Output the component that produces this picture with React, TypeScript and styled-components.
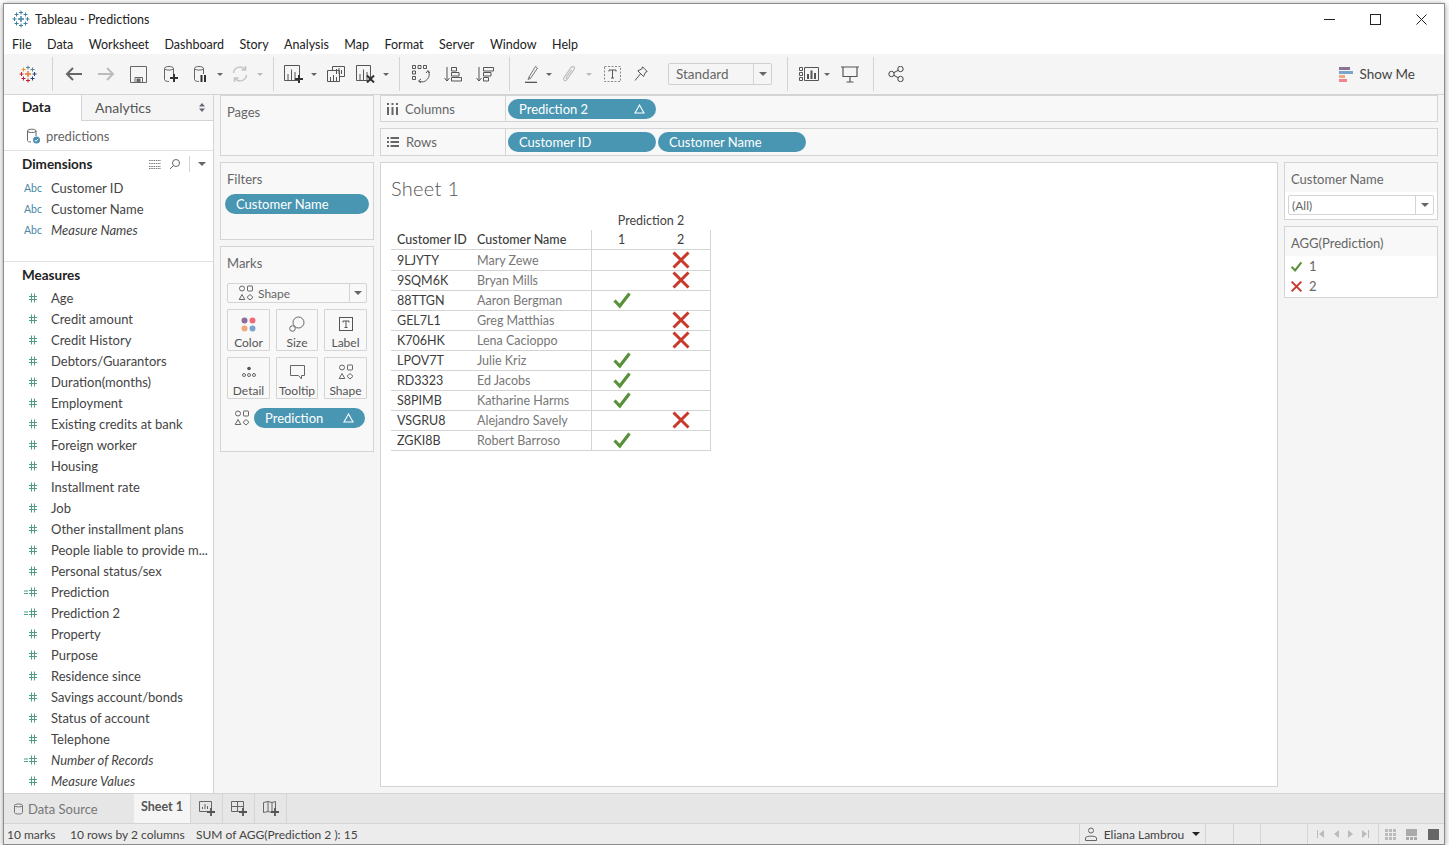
import React, { FC, ReactNode } from 'react';
import styled, { createGlobalStyle } from 'styled-components';

const Global = createGlobalStyle`
    html, body {
        margin: 0;
        padding: 0;
        background: #fff;
        overflow: hidden;
        font-family: "Lato", "Noto Sans", sans-serif;
        font-size: 13px;
        color: #333;
    }
    * { box-sizing: border-box; }
    svg { display: block; }
`;

const Window = styled.div`
    margin: 3px 0 0 3px;
    width: 1442px;
    height: 842px;
    border: 1px solid #8c8c8c;
    box-shadow: 0 1px 6px rgba(0, 0, 0, 0.4);
    background: #f5f5f5;
    display: flex;
    flex-direction: column;
`;

const TitleBar = styled.div`
    height: 30px;
    background: #fff;
    display: flex;
    align-items: center;
    padding-left: 8px;
    color: #222;
    font-size: 12.5px;
    flex: none;
`;

const TitleText = styled.span`
    margin-left: 5px;
    flex: 1;
`;

const WinBtn = styled.div`
    width: 46px;
    height: 30px;
    display: flex;
    align-items: center;
    justify-content: center;
`;

const MenuBar = styled.div`
    height: 20px;
    background: #fff;
    display: flex;
    align-items: center;
    padding-left: 8px;
    gap: 15.5px;
    color: #222;
    font-size: 12.5px;
    flex: none;
`;

const Toolbar = styled.div`
    height: 41px;
    display: flex;
    align-items: center;
    background: #f5f5f5;
    border-bottom: 1px solid #d4d4d4;
    flex: none;
`;

const ToolBtn = styled.div<{ $w: number; $ml?: number }>`
    width: ${p => p.$w}px;
    margin-left: ${p => p.$ml || 0}px;
    height: 32px;
    display: flex;
    align-items: center;
    justify-content: center;
    flex: none;
`;

const ToolSep = styled.div<{ $ml?: number }>`
    width: 1px;
    height: 34px;
    background: #d4d4d4;
    margin-left: ${p => p.$ml || 0}px;
    flex: none;
`;

const Caret = styled.div<{ $light?: boolean; $size?: number }>`
    width: 0;
    height: 0;
    border-left: ${p => p.$size || 3}px solid transparent;
    border-right: ${p => p.$size || 3}px solid transparent;
    border-top: ${p => p.$size || 3}px solid ${p => (p.$light ? '#bbb' : '#666')};
`;

const ToolSelect = styled.div`
    margin-left: 14px;
    width: 104px;
    height: 22px;
    border: 1px solid #cfcfcf;
    border-radius: 2px;
    display: flex;
    align-items: center;
    color: #666;
    font-size: 13.5px;
    flex: none;
`;

const SelectText = styled.div`
    flex: 1;
    padding-left: 7px;
`;

const SelectArrow = styled.div<{ $w?: number }>`
    width: ${p => p.$w || 18}px;
    align-self: stretch;
    border-left: 1px solid #d4d4d4;
    display: flex;
    align-items: center;
    justify-content: center;
`;

const ShowMe = styled.div`
    margin-left: auto;
    padding-right: 29px;
    display: flex;
    align-items: center;
    gap: 6px;
    font-size: 13.5px;
    color: #444;
`;

const Main = styled.div`
    flex: 1;
    display: flex;
    min-height: 0;
`;

const Sidebar = styled.div`
    width: 210px;
    background: #fff;
    border-right: 1px solid #d4d4d4;
    overflow: hidden;
    flex: none;
`;

const SideTabs = styled.div`
    height: 26px;
    display: flex;
    background: #f5f5f5;
`;

const DataTab = styled.div`
    width: 78px;
    background: #fff;
    border-right: 1px solid #d4d4d4;
    padding-left: 18px;
    line-height: 25px;
    font-weight: 700;
    font-size: 13.5px;
    color: #222;
`;

const AnalyticsTab = styled.div`
    flex: 1;
    border-bottom: 1px solid #d4d4d4;
    padding: 0 8px 0 13px;
    display: flex;
    align-items: center;
    justify-content: space-between;
    font-size: 14px;
    color: #555;
`;

const SourceRow = styled.div`
    height: 30px;
    display: flex;
    align-items: center;
    padding-left: 22px;
    gap: 6px;
    color: #666;
    border-bottom: 1px solid #e2e2e2;
`;

const SectionHead = styled.div<{ $h: number }>`
    height: ${p => p.$h}px;
    display: flex;
    align-items: center;
    padding-left: 18px;
    font-weight: 700;
    font-size: 13.5px;
    color: #222;
`;

const HeadTools = styled.div`
    margin-left: auto;
    display: flex;
    align-items: center;
    padding-right: 7px;
`;

const HeadSep = styled.div`
    width: 1px;
    height: 16px;
    background: #d4d4d4;
    margin: 0 8px 0 8px;
`;

const FieldList = styled.div<{ $divider?: boolean }>`
    padding-bottom: ${p => (p.$divider ? 21 : 0)}px;
    border-bottom: ${p => (p.$divider ? '1px solid #e2e2e2' : 'none')};
`;

const FieldRow = styled.div<{ $italic?: boolean }>`
    height: 21px;
    display: flex;
    align-items: center;
    color: #444;
    font-style: ${p => (p.$italic ? 'italic' : 'normal')};
    white-space: nowrap;
`;

const FieldIcon = styled.div`
    margin-left: 19px;
    margin-right: 8px;
    width: 20px;
    display: flex;
    justify-content: center;
    align-items: center;
    flex: none;
`;

const AbcMark = styled.span`
    font-size: 10.5px;
    font-style: normal;
    color: #4a86a6;
`;

const CardColumn = styled.div`
    width: 154px;
    margin-left: 6px;
    padding-top: 0;
    display: flex;
    flex-direction: column;
    gap: 6px;
    flex: none;
`;

const Card = styled.div<{ $h: number }>`
    height: ${p => p.$h}px;
    background: #f8f8f8;
    border: 1px solid #d4d4d4;
    flex: none;
`;

const CardTitle = styled.div`
    padding: 8px 6px 0;
    height: 31px;
    color: #666;
`;

const Pill = styled.div<{ $w: number }>`
    width: ${p => p.$w}px;
    height: 20px;
    border-radius: 10px;
    background: #4996b2;
    color: #fff;
    display: flex;
    align-items: center;
    justify-content: space-between;
    padding: 0 11px;
    flex: none;
    white-space: nowrap;
`;

const PillSlot = styled.div`
    padding-left: 4px;
`;

const MarkSelect = styled.div`
    margin: 5px 6px 6px;
    height: 20px;
    border: 1px solid #d4d4d4;
    border-radius: 2px;
    display: flex;
    align-items: center;
    font-size: 12px;
    color: #666;
`;

const MarkSelectLabel = styled.div`
    flex: 1;
    display: flex;
    align-items: center;
    gap: 4px;
    padding-left: 10px;
`;

const MarkGrid = styled.div`
    margin: 0 6px;
    display: grid;
    grid-template-columns: 43px 42px 43px;
    grid-auto-rows: 42px;
    column-gap: 6px;
    row-gap: 6px;
`;

const MarkBtn = styled.div`
    border: 1px solid #d4d4d4;
    border-radius: 1px;
    display: flex;
    flex-direction: column;
    align-items: center;
    font-size: 12px;
    color: #555;
    padding-top: 5px;
    white-space: nowrap;
`;

const MarkIcon = styled.div`
    height: 20px;
    display: flex;
    align-items: center;
    justify-content: center;
    margin-bottom: 2px;
`;

const MarkPillRow = styled.div`
    margin-top: 9px;
    padding-left: 13px;
    display: flex;
    align-items: center;
    gap: 4px;
`;

const WorkArea = styled.div`
    flex: 1;
    margin: 0 6px 6px 6px;
    display: flex;
    flex-direction: column;
    min-width: 0;
`;

const Shelf = styled.div<{ $h: number; $mb: number }>`
    height: ${p => p.$h}px;
    margin-bottom: ${p => p.$mb}px;
    border: 1px solid #d4d4d4;
    background: #f8f8f8;
    display: flex;
    align-items: center;
    flex: none;
`;

const ShelfLabel = styled.div`
    width: 125px;
    align-self: stretch;
    border-right: 1px solid #d4d4d4;
    display: flex;
    align-items: center;
    gap: 7px;
    padding-left: 6px;
    color: #666;
`;

const ShelfPills = styled.div`
    display: flex;
    gap: 2px;
    padding-left: 2px;
`;

const ViewRow = styled.div`
    flex: 1;
    display: flex;
    gap: 6px;
    min-height: 0;
`;

const Sheet = styled.div`
    flex: 1;
    background: #fff;
    border: 1px solid #d4d4d4;
    padding: 0 10px;
`;

const SheetTitle = styled.div`
    height: 48px;
    padding-top: 12px;
    font-size: 20px;
    font-weight: 300;
    color: #555;
    line-height: 27px;
    letter-spacing: 0.3px;
`;

const TableRow = styled.div`
    display: grid;
    grid-template-columns: 80px 120px 60px 60px;
    width: 321px;
    height: 20px;
`;

const HeadRowTop = styled.div`
    width: 320px;
    height: 19px;
    padding-left: 200px;
    text-align: center;
    line-height: 19px;
    color: #444;
    font-size: 12.5px;
`;

const Cell = styled.div<{ $muted?: boolean; $head?: boolean; $first?: boolean; $last?: boolean }>`
    display: flex;
    align-items: center;
    justify-content: ${p => (p.$first || p.$last ? 'center' : 'flex-start')};
    padding-left: ${p => (p.$first || p.$last ? 0 : 6)}px;
    border-bottom: 1px solid #d4d4d4;
    border-left: ${p => (p.$first ? '1px solid #d4d4d4' : 'none')};
    border-right: ${p => (p.$last ? '1px solid #d4d4d4' : 'none')};
    color: ${p => (p.$muted ? '#777' : '#3c3c3c')};
    font-size: 12.5px;
    white-space: nowrap;
    font-weight: ${p => (p.$head ? 500 : 400)};
`;

const RightColumn = styled.div`
    width: 154px;
    display: flex;
    flex-direction: column;
    gap: 6px;
    flex: none;
`;

const LegendCard = styled.div<{ $h: number }>`
    height: ${p => p.$h}px;
    border: 1px solid #d4d4d4;
    background: #fff;
    flex: none;
`;

const LegendTitle = styled.div`
    height: 29px;
    background: #f8f8f8;
    padding: 8px 6px 0;
    color: #666;
`;

const FilterSelect = styled.div`
    margin: 3px 3px 0;
    height: 20px;
    border: 1px solid #d4d4d4;
    border-radius: 2px;
    display: flex;
    align-items: center;
    padding-left: 3px;
    color: #666;
    font-size: 12px;
`;

const FilterValue = styled.div`
    flex: 1;
`;

const LegendRow = styled.div`
    height: 20px;
    display: flex;
    align-items: center;
    gap: 6px;
    padding-left: 5px;
    color: #666;
`;

const SheetTabs = styled.div`
    height: 30px;
    display: flex;
    background: #e6e6e6;
    border-top: 1px solid #d4d4d4;
    flex: none;
`;

const SourceTab = styled.div`
    width: 130px;
    display: flex;
    align-items: center;
    gap: 5px;
    padding-left: 10px;
    color: #777;
`;

const ActiveTab = styled.div`
    width: 57px;
    background: #f5f5f5;
    border-right: 1px solid #d4d4d4;
    text-align: center;
    line-height: 26px;
    font-weight: 700;
    font-size: 12.5px;
    color: #555;
`;

const AddTab = styled.div`
    width: 32px;
    border-right: 1px solid #d4d4d4;
    display: flex;
    align-items: center;
    justify-content: center;
`;

const StatusBar = styled.div`
    height: 21px;
    display: flex;
    align-items: center;
    background: #ececec;
    border-top: 1px solid #d4d4d4;
    font-size: 12px;
    color: #444;
    flex: none;
`;

const StatusText = styled.div<{ $w: number; $ml?: number }>`
    width: ${p => p.$w}px;
    margin-left: ${p => p.$ml || 0}px;
    white-space: nowrap;
`;

const StatusCell = styled.div<{ $w: number }>`
    width: ${p => p.$w}px;
    align-self: stretch;
    border-left: 1px solid #d4d4d4;
    display: flex;
    align-items: center;
    justify-content: center;
    gap: 7px;
    flex: none;
`;

const Spacer = styled.div`
    flex: 1;
`;

const BlackCaret = styled.div`
    width: 0;
    height: 0;
    border-left: 4px solid transparent;
    border-right: 4px solid transparent;
    border-top: 4px solid #222;
    margin-left: 1px;
`;

const Line: FC<{ w: number; h: number; c?: string; sw?: number; children: ReactNode }> = ({ w, h, c = '#555', sw = 1, children }) => (
    <svg width={w} height={h} viewBox={`0 0 ${w} ${h}`} fill="none" stroke={c} strokeWidth={sw}>{children}</svg>
);

const Plus: FC<{ x: number; y: number; r: number; c: string; sw?: number }> = ({ x, y, r, c, sw = 1 }) => (
    <path d={`M${x - r} ${y}H${x + r}M${x} ${y - r}V${y + r}`} stroke={c} strokeWidth={sw} fill="none" />
);

const TableauLogo: FC<{ mono?: boolean }> = ({ mono }) => {
    const c = (v: string) => (mono ? '#3f7fa6' : v);
    return (
        <svg width="18" height="18" viewBox="0 0 18 18">
            <Plus x={9} y={9} r={3} c={c('#e8762d')} sw={1.4} />
            <Plus x={9} y={2.5} r={2} c={c('#5b879b')} />
            <Plus x={9} y={15.5} r={2} c={c('#c72037')} />
            <Plus x={2.5} y={9} r={2} c={c('#c72037')} />
            <Plus x={15.5} y={9} r={2} c={c('#1f447e')} />
            <Plus x={4.5} y={4.5} r={2} c={c('#e8962d')} />
            <Plus x={13.5} y={4.5} r={2} c={c('#5b879b')} />
            <Plus x={4.5} y={13.5} r={2} c={c('#c72037')} />
            <Plus x={13.5} y={13.5} r={2} c={c('#1f447e')} />
        </svg>
    );
};

const Cylinder: FC<{ children?: ReactNode }> = ({ children }) => (
    <Line w={18} h={18} c="#666">
        <path d="M3.5 3.5C3.5 .8 12.5 .8 12.5 3.5V9M3.5 3.5C3.5 5.6 12.5 5.6 12.5 3.5M3.5 3.5V14.5C3.5 15.8 5.5 16.5 8 16.5" />
        {children}
    </Line>
);

const Check: FC<{ size?: number }> = ({ size = 20 }) => (
    <svg width={size} height={size} viewBox="0 0 20 20" fill="none" stroke="#59903a" strokeWidth="3.2">
        <path d="M2.5 10.5L7.8 16L17.5 3.5" />
    </svg>
);

const Cross: FC<{ size?: number }> = ({ size = 20 }) => (
    <svg width={size} height={size} viewBox="0 0 20 20" fill="none" stroke="#c8392b" strokeWidth="3">
        <path d="M2.5 2.5L17.5 17.5M17.5 2.5L2.5 17.5" />
    </svg>
);

const Delta = () => (
    <svg width="11" height="10" viewBox="0 0 11 10" fill="none" stroke="#fff" strokeWidth="1.1">
        <path d="M5.5 1L1 9H10Z" />
    </svg>
);

const ShapeIcon = () => (
    <Line w={16} h={16} c="#666">
        <circle cx="4" cy="3.5" r="2.5" />
        <rect x="9.5" y="1" width="5" height="5" rx="0.5" />
        <path d="M4 9.5L1.2 14.5H6.8Z" />
        <path d="M12 9.5L15 12.3L12 15L9 12.3Z" />
    </Line>
);

const Hash: FC<{ eq?: boolean }> = ({ eq }) => (
    <svg width="20" height="12" viewBox="0 0 20 12" fill="none" stroke="#4f9f7e" strokeWidth="1">
        {eq && <path d="M1 5H5M1 7.5H5" />}
        <path d="M8.5 1.5V10.5M11.5 1.5V10.5M6 4.5H14M6 7.5H14" />
    </svg>
);

const dimensions = ['Customer ID', 'Customer Name', 'Measure Names'];

const measures: { name: string; eq?: boolean; italic?: boolean }[] = [
    { name: 'Age' },
    { name: 'Credit amount' },
    { name: 'Credit History' },
    { name: 'Debtors/Guarantors' },
    { name: 'Duration(months)' },
    { name: 'Employment' },
    { name: 'Existing credits at bank' },
    { name: 'Foreign worker' },
    { name: 'Housing' },
    { name: 'Installment rate' },
    { name: 'Job' },
    { name: 'Other installment plans' },
    { name: 'People liable to provide m...' },
    { name: 'Personal status/sex' },
    { name: 'Prediction', eq: true },
    { name: 'Prediction 2', eq: true },
    { name: 'Property' },
    { name: 'Purpose' },
    { name: 'Residence since' },
    { name: 'Savings account/bonds' },
    { name: 'Status of account' },
    { name: 'Telephone' },
    { name: 'Number of Records', eq: true, italic: true },
    { name: 'Measure Values', italic: true },
];

const rows: [string, string, 1 | 2][] = [
    ['9LJYTY', 'Mary Zewe', 2],
    ['9SQM6K', 'Bryan Mills', 2],
    ['88TTGN', 'Aaron Bergman', 1],
    ['GEL7L1', 'Greg Matthias', 2],
    ['K706HK', 'Lena Cacioppo', 2],
    ['LPOV7T', 'Julie Kriz', 1],
    ['RD3323', 'Ed Jacobs', 1],
    ['S8PIMB', 'Katharine Harms', 1],
    ['VSGRU8', 'Alejandro Savely', 2],
    ['ZGKI8B', 'Robert Barroso', 1],
];

const menus = ['File', 'Data', 'Worksheet', 'Dashboard', 'Story', 'Analysis', 'Map', 'Format', 'Server', 'Window', 'Help'];

const App: FC = () => (
    <Window>
        <Global />
        <TitleBar>
            <TableauLogo mono />
            <TitleText>Tableau - Predictions</TitleText>
            <WinBtn><Line w={11} h={11} c="#222"><path d="M0 5.5H11" /></Line></WinBtn>
            <WinBtn><Line w={11} h={11} c="#222"><rect x=".5" y=".5" width="10" height="10" /></Line></WinBtn>
            <WinBtn><Line w={11} h={11} c="#222"><path d="M.5 .5L10.5 10.5M10.5 .5L.5 10.5" /></Line></WinBtn>
        </TitleBar>
        <MenuBar>
            {menus.map(m => <span key={m}>{m}</span>)}
        </MenuBar>
        <Toolbar>
            <ToolBtn $w={48}><TableauLogo /></ToolBtn>
            <ToolSep />
            <ToolBtn $w={32} $ml={5}>
                <Line w={18} h={14} c="#666" sw={2}><path d="M17 7H2M8 1L2 7L8 13" /></Line>
            </ToolBtn>
            <ToolBtn $w={32}>
                <Line w={18} h={14} c="#bbb" sw={2}><path d="M1 7H16M10 1L16 7L10 13" /></Line>
            </ToolBtn>
            <ToolBtn $w={32}>
                <Line w={17} h={17} c="#666"><path d="M.5 .5H16.5V16.5H.5ZM5 16.5V11.5H12.5V16.5" /><rect x="7" y="13" width="3" height="3" fill="#666" /></Line>
            </ToolBtn>
            <ToolBtn $w={31}>
                <Cylinder><Plus x={13} y={13} r={4} c="#333" sw={2} /></Cylinder>
            </ToolBtn>
            <ToolBtn $w={30}>
                <Cylinder><path d="M10.5 10V17M14 10V17" stroke="#333" strokeWidth="2" /></Cylinder>
            </ToolBtn>
            <ToolBtn $w={10}><Caret /></ToolBtn>
            <ToolBtn $w={30}>
                <Line w={18} h={18} c="#c4c4c4" sw={1.5}><path d="M2.5 8A6.5 6.5 0 0 1 14 4.5M15.5 10A6.5 6.5 0 0 1 4 13.5M14.5 1V5H10.5M3.5 17V13H7.5" /></Line>
            </ToolBtn>
            <ToolBtn $w={10}><Caret $light /></ToolBtn>
            <ToolSep $ml={8} />
            <ToolBtn $w={32} $ml={4}>
                <Line w={20} h={18} c="#555">
                    <path d="M.5 .5H15.5V15.5H.5ZM4 15.5V9M7.5 15.5V4.5M11 15.5V7" />
                    <Plus x={15} y={14} r={4} c="#333" sw={2} />
                </Line>
            </ToolBtn>
            <ToolBtn $w={8}><Caret /></ToolBtn>
            <ToolBtn $w={36}>
                <Line w={18} h={16} c="#555">
                    <path d="M5.5 4V.5H17.5V10.5H13M9.5 8V3M12 8V2M14.5 8V4" />
                    <path d="M.5 4.5H12.5V15.5H.5ZM3.5 15.5V11M6.5 15.5V9M9.5 15.5V11" />
                </Line>
            </ToolBtn>
            <ToolBtn $w={24}>
                <Line w={20} h={18} c="#555">
                    <path d="M.5 .5H14.5V15.5H.5ZM4 15.5V9M7.5 15.5V4.5M11 15.5V7" />
                    <path d="M11 10.5L18 17.5M18 10.5L11 17.5" stroke="#333" strokeWidth="2" />
                </Line>
            </ToolBtn>
            <ToolBtn $w={16}><Caret /></ToolBtn>
            <ToolSep $ml={5} />
            <ToolBtn $w={42}>
                <Line w={18} h={18} c="#555">
                    <path d="M.5 .5H3.5V3.5H.5ZM6 .5H9V3.5H6ZM11.5 .5H14.5V3.5H11.5ZM.5 6H3.5V9H.5ZM.5 11.5H3.5V14.5H.5Z" />
                    <path d="M16 6A7 7 0 0 1 7 16M14 8L16 5.5L18 8M9 14L6.5 16L9 18" />
                </Line>
            </ToolBtn>
            <ToolBtn $w={22}>
                <Line w={18} h={16} c="#555">
                    <path d="M3 1V15M.5 12L3 15L5.5 12M7.5 1.500H12.5V5H7.500ZM7.500 6.500H15V10H7.500ZM7.500 11.500H17.500V15H7.500Z" />
                </Line>
            </ToolBtn>
            <ToolBtn $w={42}>
                <Line w={18} h={16} c="#555">
                    <path d="M3 1V15M.5 12L3 15L5.500 12M7.500 1.500H17.500V5H7.500ZM7.500 6.500H15V10H7.500ZM7.500 11.500H12.500V15H7.500Z" />
                </Line>
            </ToolBtn>
            <ToolSep $ml={3} />
            <ToolBtn $w={20} $ml={12}>
                <Line w={14} h={18} c="#777">
                    <path d="M4 12L3 14.500L5.500 13.500L12.500 3L10.500 1.500ZM4 12L5.500 13.500" />
                    <path d="M0 17.500H12" stroke="#555" strokeWidth="1.6" />
                </Line>
            </ToolBtn>
            <ToolBtn $w={14}><Caret /></ToolBtn>
            <ToolBtn $w={26}>
                <Line w={14} h={18} c="#bbb" sw={1.2}>
                    <path d="M11 6L5 14.500C3 17 .5 15 2 12.500L9 2.500C10.500 .5 13.500 2 12 4.500L6 13C5 14.300 3.800 13.500 4.500 12L9.500 5" />
                </Line>
            </ToolBtn>
            <ToolBtn $w={14}><Caret $light /></ToolBtn>
            <ToolBtn $w={32}>
                <svg width="17" height="16" viewBox="0 0 17 16" fill="none" stroke="#888">
                    <rect x=".5" y=".5" width="16" height="15" strokeDasharray="2 1.500" />
                    <path d="M5 5.500V4H12V5.500M8.500 4V12M7 12H10" stroke="#555" />
                </svg>
            </ToolBtn>
            <ToolBtn $w={26}>
                <Line w={14} h={16} c="#555">
                    <path d="M8.500 .8L13.200 5.500L11.500 6.200L9.500 10.500L3.800 4.800L8 2.800ZM6.500 7.800L1 14.500" />
                </Line>
            </ToolBtn>
            <ToolSelect>
                <SelectText>Standard</SelectText>
                <SelectArrow $w={18}><Caret $size={4} /></SelectArrow>
            </ToolSelect>
            <ToolSep $ml={15} />
            <ToolBtn $w={24} $ml={9}>
                <Line w={20} h={14} c="#555">
                    <path d="M.5 .5H3.500V3.500H.5ZM.5 5.500H3.500V8.500H.5ZM.5 10.500H3.500V13.500H.5ZM5.500 .5H19.500V13.500H5.500Z" />
                    <path d="M9 12V7M12.500 12V3.500M16 12V6" strokeWidth="2" />
                </Line>
            </ToolBtn>
            <ToolBtn $w={12}><Caret /></ToolBtn>
            <ToolBtn $w={34}>
                <Line w={18} h={17} c="#555">
                    <path d="M0 1H18M2 1V10.500H16V1M9 10.500V15.500M5.500 16H12.500" strokeWidth="1.200" />
                </Line>
            </ToolBtn>
            <ToolSep $ml={6} />
            <ToolBtn $w={44}>
                <Line w={16} h={16} c="#444">
                    <circle cx="3.500" cy="8" r="2.700" /><circle cx="12.500" cy="3" r="2.700" /><circle cx="12.500" cy="13" r="2.700" />
                    <path d="M5.800 6.700L10.200 4.300M5.800 9.300L10.200 11.700" />
                </Line>
            </ToolBtn>
            <ShowMe>
                <svg width="14" height="15" viewBox="0 0 14 15">
                    <rect x="0" y="0" width="11" height="3" fill="#8a7398" />
                    <rect x="0" y="4" width="14" height="3" fill="#7ba3cc" />
                    <rect x="0" y="8" width="6" height="3" fill="#f0a77e" />
                    <rect x="0" y="12" width="8" height="3" fill="#f4828c" />
                </svg>
                Show Me
            </ShowMe>
        </Toolbar>
        <Main>
            <Sidebar>
                <SideTabs>
                    <DataTab>Data</DataTab>
                    <AnalyticsTab>
                        Analytics
                        <svg width="6" height="9" viewBox="0 0 6 9" fill="#667"><path d="M3 0L6 3.500H0ZM3 9L0 5.500H6Z" /></svg>
                    </AnalyticsTab>
                </SideTabs>
                <SourceRow>
                    <svg width="14" height="16" viewBox="0 0 14 16" fill="none" stroke="#666">
                        <path d="M1.500 3C1.500 .6 10 .6 10 3V8M1.500 3C1.500 5 10 5 10 3M1.500 3V12.500C1.500 13.500 3 14 5 14" />
                        <circle cx="10.500" cy="12" r="3.500" fill="#4a8fb0" stroke="none" />
                        <path d="M8.800 12L10 13.300L12.200 10.800" stroke="#fff" />
                    </svg>
                    predictions
                </SourceRow>
                <SectionHead $h={26}>
                    Dimensions
                    <HeadTools>
                        <svg width="12" height="9" viewBox="0 0 12 9" stroke="#777" strokeDasharray="1.500 .8"><path d="M0 .5H12M0 3.500H12M0 6.500H12M0 8.500H12" /></svg>
                        <svg width="12" height="12" viewBox="0 0 12 12" fill="none" stroke="#666" style={{ marginLeft: 8 }}><circle cx="7" cy="5" r="3.500" /><path d="M4.500 7.500L1 11" /></svg>
                        <HeadSep />
                        <Caret $size={4} />
                    </HeadTools>
                </SectionHead>
                <FieldList $divider>
                    {dimensions.map((d, i) => (
                        <FieldRow key={d} $italic={i === 2}>
                            <FieldIcon><AbcMark>Abc</AbcMark></FieldIcon>
                            {d}
                        </FieldRow>
                    ))}
                </FieldList>
                <SectionHead $h={25}>Measures</SectionHead>
                <FieldList>
                    {measures.map(m => (
                        <FieldRow key={m.name} $italic={m.italic}>
                            <FieldIcon><Hash eq={m.eq} /></FieldIcon>
                            {m.name}
                        </FieldRow>
                    ))}
                </FieldList>
            </Sidebar>
            <CardColumn>
                <Card $h={61}><CardTitle>Pages</CardTitle></Card>
                <Card $h={78}>
                    <CardTitle>Filters</CardTitle>
                    <PillSlot><Pill $w={144}>Customer Name</Pill></PillSlot>
                </Card>
                <Card $h={206}>
                    <CardTitle>Marks</CardTitle>
                    <MarkSelect>
                        <MarkSelectLabel><ShapeIcon />Shape</MarkSelectLabel>
                        <SelectArrow $w={17}><Caret $size={4} /></SelectArrow>
                    </MarkSelect>
                    <MarkGrid>
                        <MarkBtn>
                            <MarkIcon>
                                <svg width="15" height="15" viewBox="0 0 15 15">
                                    <circle cx="3.500" cy="3.500" r="3" fill="#8a6d9b" />
                                    <circle cx="11.500" cy="3.500" r="3" fill="#ef6a7a" />
                                    <circle cx="3.500" cy="11.500" r="3" fill="#f0a77e" />
                                    <circle cx="11.500" cy="11.500" r="3" fill="#7ba3cc" />
                                </svg>
                            </MarkIcon>
                            Color
                        </MarkBtn>
                        <MarkBtn>
                            <MarkIcon>
                                <Line w={16} h={16} c="#666"><circle cx="9.500" cy="6.500" r="5.500" /><circle cx="3.500" cy="12.500" r="2.800" fill="#f8f8f8" /></Line>
                            </MarkIcon>
                            Size
                        </MarkBtn>
                        <MarkBtn>
                            <MarkIcon>
                                <Line w={14} h={14} c="#555"><rect x=".5" y=".5" width="13" height="13" /><path d="M4 5.500V4H10V5.500M7 4V10.500M5.500 10.500H8.500" /></Line>
                            </MarkIcon>
                            Label
                        </MarkBtn>
                        <MarkBtn>
                            <MarkIcon>
                                <Line w={14} h={12} c="#666"><circle cx="7" cy="2.500" r="1.800" fill="#555" stroke="none" /><circle cx="2" cy="9" r="1.500" /><circle cx="7" cy="9" r="1.500" /><circle cx="12" cy="9" r="1.500" /></Line>
                            </MarkIcon>
                            Detail
                        </MarkBtn>
                        <MarkBtn>
                            <MarkIcon>
                                <Line w={15} h={15} c="#666"><path d="M.5 .5H14.500V10.500H11.500V14L8.500 10.500H.5Z" /></Line>
                            </MarkIcon>
                            Tooltip
                        </MarkBtn>
                        <MarkBtn>
                            <MarkIcon><ShapeIcon /></MarkIcon>
                            Shape
                        </MarkBtn>
                    </MarkGrid>
                    <MarkPillRow>
                        <ShapeIcon />
                        <Pill $w={111}>Prediction<Delta /></Pill>
                    </MarkPillRow>
                </Card>
            </CardColumn>
            <WorkArea>
                <Shelf $h={27} $mb={6}>
                    <ShelfLabel>
                        <svg width="11" height="12" viewBox="0 0 11 12" fill="#666"><path d="M0 4H2V12H0ZM4.500 4H6.500V12H4.500ZM9 4H11V12H9ZM0 0H2V2H0ZM4.500 0H6.500V2H4.500ZM9 0H11V2H9Z" /></svg>
                        Columns
                    </ShelfLabel>
                    <ShelfPills><Pill $w={148}>Prediction 2<Delta /></Pill></ShelfPills>
                </Shelf>
                <Shelf $h={28} $mb={6}>
                    <ShelfLabel>
                        <svg width="12" height="10" viewBox="0 0 12 10" fill="#666"><path d="M0 0H2V2H0ZM3.500 0H12V2H3.500ZM0 4H2V6H0ZM3.500 4H12V6H3.500ZM0 8H2V10H0ZM3.500 8H12V10H3.500Z" /></svg>
                        Rows
                    </ShelfLabel>
                    <ShelfPills>
                        <Pill $w={148}>Customer ID</Pill>
                        <Pill $w={148}>Customer Name</Pill>
                    </ShelfPills>
                </Shelf>
                <ViewRow>
                    <Sheet>
                        <SheetTitle>Sheet 1</SheetTitle>
                        <HeadRowTop>Prediction 2</HeadRowTop>
                        <TableRow>
                            <Cell $head>Customer ID</Cell>
                            <Cell $head>Customer Name</Cell>
                            <Cell $first>1</Cell>
                            <Cell $last>2</Cell>
                        </TableRow>
                        {rows.map(([id, name, pred]) => (
                            <TableRow key={id}>
                                <Cell>{id}</Cell>
                                <Cell $muted>{name}</Cell>
                                <Cell $first>{pred === 1 && <Check />}</Cell>
                                <Cell $last>{pred === 2 && <Cross />}</Cell>
                            </TableRow>
                        ))}
                    </Sheet>
                    <RightColumn>
                        <LegendCard $h={58}>
                            <LegendTitle>Customer Name</LegendTitle>
                            <FilterSelect>
                                <FilterValue>(All)</FilterValue>
                                <SelectArrow $w={18}><Caret $size={4} /></SelectArrow>
                            </FilterSelect>
                        </LegendCard>
                        <LegendCard $h={72}>
                            <LegendTitle>AGG(Prediction)</LegendTitle>
                            <LegendRow><Check size={13} />1</LegendRow>
                            <LegendRow><Cross size={13} />2</LegendRow>
                        </LegendCard>
                    </RightColumn>
                </ViewRow>
            </WorkArea>
        </Main>
        <SheetTabs>
            <SourceTab>
                <svg width="9" height="12" viewBox="0 0 9 12" fill="none" stroke="#777"><path d="M.5 2.500C.5 .5 8.500 .5 8.500 2.500V9.500C8.500 11.500 .5 11.500 .5 9.500ZM.5 2.500C.5 4.300 8.500 4.300 8.500 2.500" /></svg>
                Data Source
            </SourceTab>
            <ActiveTab>Sheet 1</ActiveTab>
            <AddTab>
                <Line w={16} h={15} c="#666">
                    <path d="M.5 .5H12.500V10.500H.5ZM3.500 8V6M6 8V3M8.500 8V5" />
                    <Plus x={12} y={11} r={4} c="#555" sw={1.800} />
                </Line>
            </AddTab>
            <AddTab>
                <Line w={16} h={15} c="#666">
                    <path d="M.5 .5H12.500V10.500H.5ZM6.500 .5V10.500M.5 5.500H12.500" />
                    <Plus x={12} y={11} r={4} c="#555" sw={1.800} />
                </Line>
            </AddTab>
            <AddTab>
                <Line w={16} h={15} c="#666">
                    <path d="M.5 1.500L5 .5L9 1.500L12.500 .5V10.500L9 11.500L5 10.500L.5 11.500ZM5 .5V10.500M9 1.500V11.500" />
                    <Plus x={12} y={11} r={4} c="#555" sw={1.800} />
                </Line>
            </AddTab>
        </SheetTabs>
        <StatusBar>
            <StatusText $w={60} $ml={3}>10 marks</StatusText>
            <StatusText $w={126} $ml={3}>10 rows by 2 columns</StatusText>
            <StatusText $w={300}>SUM of AGG(Prediction 2 ): 15</StatusText>
            <Spacer />
            <StatusCell $w={126}>
                <Line w={12} h={14} c="#666"><circle cx="6" cy="3.500" r="2.500" /><path d="M.5 13.500V11C.5 8.500 11.500 8.500 11.500 11V13.500Z" /></Line>
                Eliana Lambrou
                <BlackCaret />
            </StatusCell>
            <StatusCell $w={28} />
            <StatusCell $w={27} />
            <StatusCell $w={47} />
            <StatusCell $w={71}>
                <svg width="52" height="8" viewBox="0 0 52 8" fill="#bbb">
                    <path d="M0 0H1V8H0ZM7 0V8L2 4ZM22 0V8L17 4ZM31 0V8L36 4ZM45 0V8L50 4ZM51 0H52V8H51Z" />
                </svg>
            </StatusCell>
            <StatusCell $w={66}>
                <svg width="54" height="11" viewBox="0 0 54 11">
                    <path d="M0 0H3V3H0ZM4 0H7V3H4ZM8 0H11V3H8ZM0 4H3V7H0ZM4 4H7V7H4ZM8 4H11V7H8ZM0 8H3V11H0ZM4 8H7V11H4ZM8 8H11V11H8Z" fill="#bbb" />
                    <path d="M21 0H32V7H21ZM21 8H24V11H21ZM25 8H28V11H25ZM29 8H32V11H29Z" fill="#aaa" />
                    <rect x="43" y="0" width="11" height="11" fill="#666" />
                </svg>
            </StatusCell>
        </StatusBar>
    </Window>
);

export default App;
